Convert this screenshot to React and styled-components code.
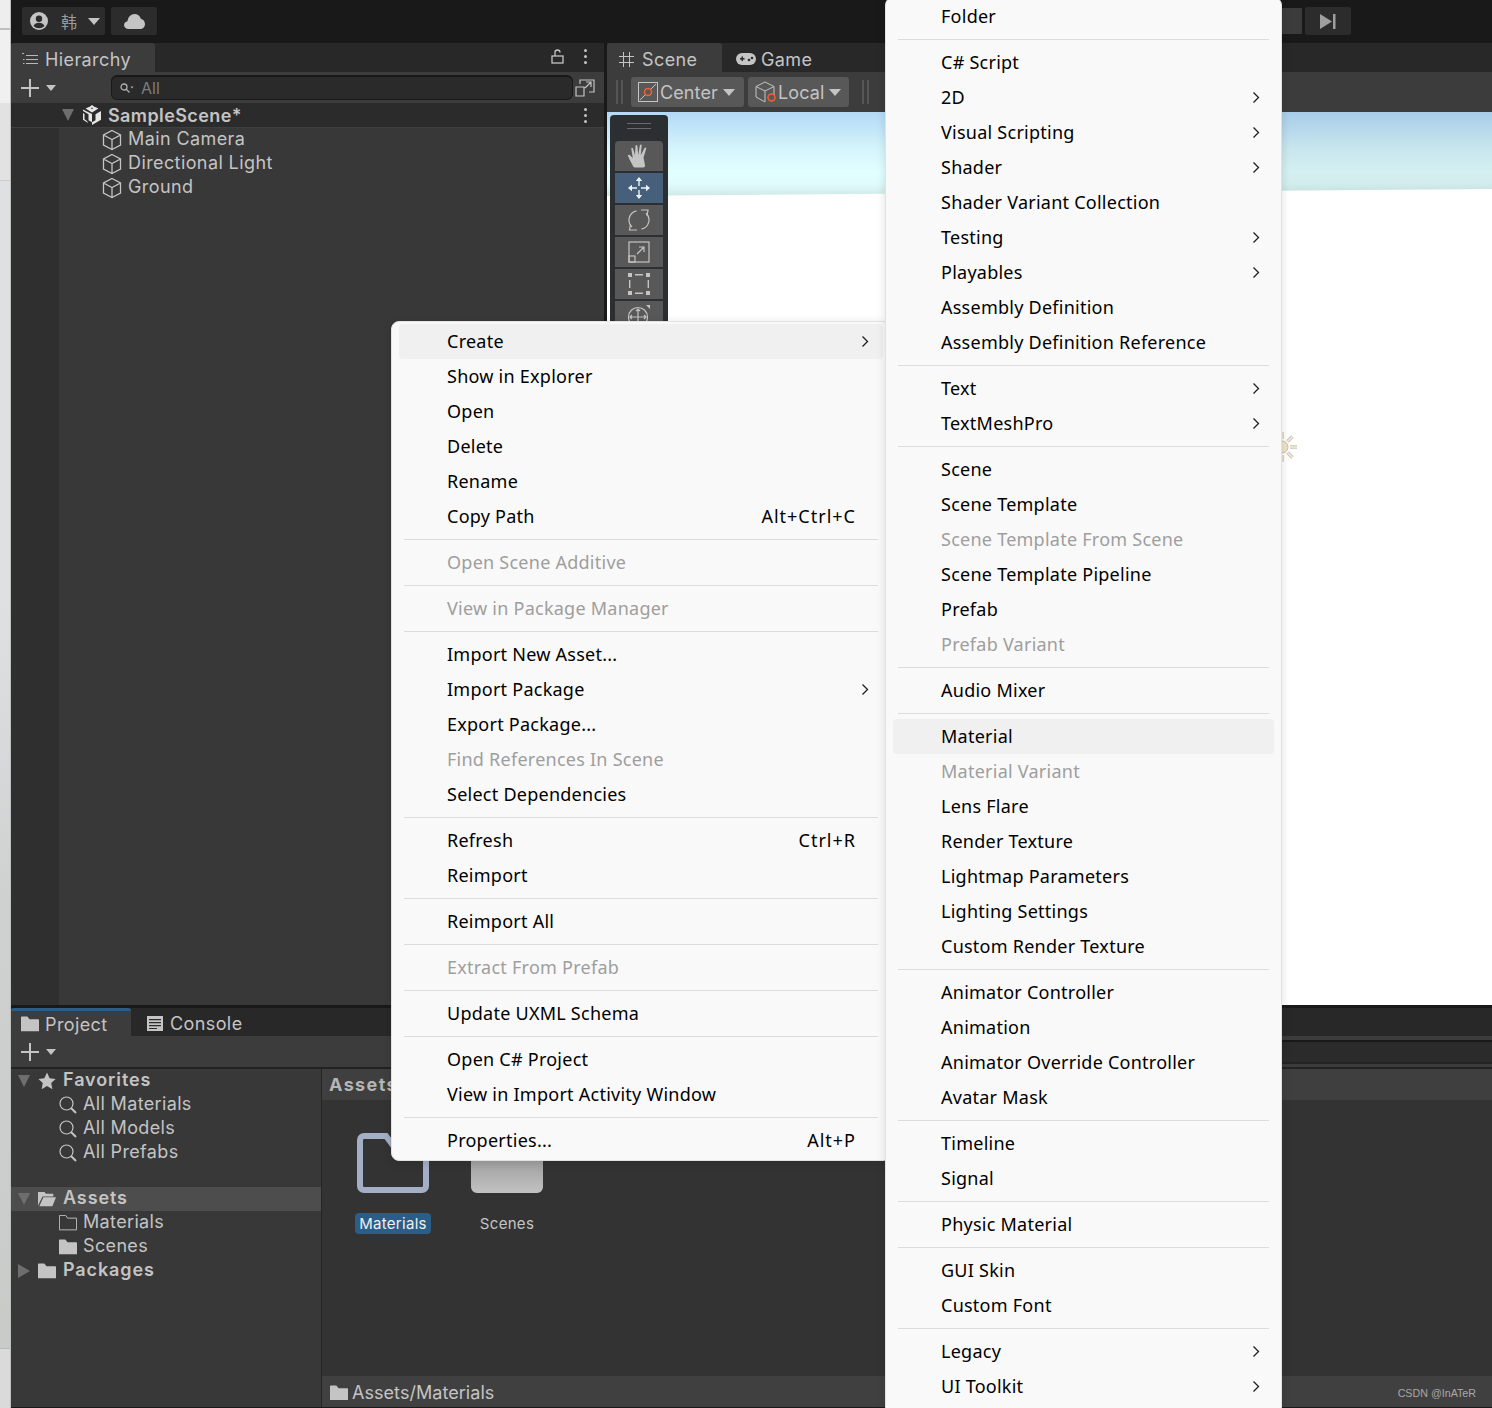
import React from "react";
import styled, { createGlobalStyle } from "styled-components";

const createMenu = [
  [{ label: "Folder" }],
  [
    { label: "C# Script" },
    { label: "2D", sub: true },
    { label: "Visual Scripting", sub: true },
    { label: "Shader", sub: true },
    { label: "Shader Variant Collection" },
    { label: "Testing", sub: true },
    { label: "Playables", sub: true },
    { label: "Assembly Definition" },
    { label: "Assembly Definition Reference" },
  ],
  [{ label: "Text", sub: true }, { label: "TextMeshPro", sub: true }],
  [
    { label: "Scene" },
    { label: "Scene Template" },
    { label: "Scene Template From Scene", off: true },
    { label: "Scene Template Pipeline" },
    { label: "Prefab" },
    { label: "Prefab Variant", off: true },
  ],
  [{ label: "Audio Mixer" }],
  [
    { label: "Material", hot: true },
    { label: "Material Variant", off: true },
    { label: "Lens Flare" },
    { label: "Render Texture" },
    { label: "Lightmap Parameters" },
    { label: "Lighting Settings" },
    { label: "Custom Render Texture" },
  ],
  [
    { label: "Animator Controller" },
    { label: "Animation" },
    { label: "Animator Override Controller" },
    { label: "Avatar Mask" },
  ],
  [{ label: "Timeline" }, { label: "Signal" }],
  [{ label: "Physic Material" }],
  [{ label: "GUI Skin" }, { label: "Custom Font" }],
  [{ label: "Legacy", sub: true }, { label: "UI Toolkit", sub: true }],
];

const contextMenu = [
  [
    { label: "Create", sub: true, hot: true },
    { label: "Show in Explorer" },
    { label: "Open" },
    { label: "Delete" },
    { label: "Rename" },
    { label: "Copy Path", keys: "Alt+Ctrl+C" },
  ],
  [{ label: "Open Scene Additive", off: true }],
  [{ label: "View in Package Manager", off: true }],
  [
    { label: "Import New Asset..." },
    { label: "Import Package", sub: true },
    { label: "Export Package..." },
    { label: "Find References In Scene", off: true },
    { label: "Select Dependencies" },
  ],
  [{ label: "Refresh", keys: "Ctrl+R" }, { label: "Reimport" }],
  [{ label: "Reimport All" }],
  [{ label: "Extract From Prefab", off: true }],
  [{ label: "Update UXML Schema" }],
  [{ label: "Open C# Project" }, { label: "View in Import Activity Window" }],
  [{ label: "Properties...", keys: "Alt+P" }],
];

const Folder = ({ size = 18, open, outline }) => (
  <svg width={size} height={size * 0.85} viewBox="0 0 20 17">
    {outline ? (
      <path d="M.5 16.500V.5h7l2 3h10v13z" fill="none" stroke="#c4c4c4" />
    ) : open ? (
      <path d="M0 16V1h7l2 2h8v3H5L0 16zm1.500 1L6 7h14l-4 10z" fill="#c4c4c4" />
    ) : (
      <path d="M0 17V1.500C0 1 .5.500 1 .5h6l2.500 3H19c.5 0 1 .5 1 1V17z" fill="#c4c4c4" />
    )}
  </svg>
);

const Cube = () => (
  <svg width="20" height="22" viewBox="0 0 20 22" fill="none" stroke="#c4c4c4" strokeWidth="1.300">
    <path d="M10 1.500l8.500 4.500v10L10 20.500 1.500 16V6zM1.500 6L10 10.500 18.500 6M10 10.500v10" />
  </svg>
);

const UnityLogo = () => (
  <svg width="20" height="20" viewBox="0 0 20 20" fill="#e6e6e6">
    <path d="M10 0l3 2.200-1.600 1.200L10 2.600l-1.400.8L7 2.200zM3.600 3.600L6.800 2 10 4l3.200-2 3.200 1.600L10 7.500z" />
    <path d="M1 6l5.500 3.200v6L10 17.300v-8.200L1 4.500zM19 6l-5.500 3.200v6L10 17.300V20l9-5.200z" />
    <path d="M1 8v6.800L6 18l-1-2-2.500-1.800V9z" />
  </svg>
);

const Magnifier = () => (
  <svg width="18" height="18" viewBox="0 0 18 18" fill="none" stroke="#c4c4c4">
    <circle cx="7.500" cy="7.500" r="6.500" strokeWidth="1.200" />
    <path d="M12 12l5 5" strokeWidth="2" />
  </svg>
);

const Hand = () => (
  <svg width="22" height="24" viewBox="0 0 22 24" fill="#c4c4c4">
    <path d="M4.500 21C3 18 .8 14.500 0 11.800c-.3-1.200 1-1.500 1.700-.7L4.800 14 3.300 5c-.2-1.300 1.500-1.600 1.800-.3L7 11 7.500 2c.1-1.300 1.800-1.300 1.900 0L10.200 11l1.700-9.800c.2-1.200 1.900-1 1.800.3l-1 9.800L16.500 4c.5-1.100 2-.5 1.700.7L15.500 13.500 17 21c.3 1.500-.5 2.500-2 2.500H7c-1.300 0-2-1.200-2.500-2.500z" />
  </svg>
);

const MoveIcon = () => (
  <svg width="24" height="24" viewBox="0 0 24 24" fill="none" stroke="#eef2f6" strokeWidth="1.400">
    <path d="M12 5v5M12 14v5M5 12h5M14 12h5" />
    <path d="M12 1l3.200 4H8.800zM12 23l3.200-4H8.800zM1 12l4-3.200v6.400zM23 12l-4-3.200v6.400z" fill="#eef2f6" stroke="none" />
  </svg>
);

const RotateIcon = () => (
  <svg width="22" height="22" viewBox="0 0 22 22" fill="none" stroke="#c4c4c4" strokeWidth="1.200">
    <path d="M8.500 1.800A9.500 9.500 0 0 0 4 18M13.500 20.200A9.500 9.500 0 0 0 18 4" />
    <path d="M13 1h7l-1 6M9 21H1.500l1-6" />
  </svg>
);

const ScaleIcon = () => (
  <svg width="22" height="22" viewBox="0 0 22 22" fill="none" stroke="#c4c4c4" strokeWidth="1.200">
    <rect x="1" y="1" width="20" height="20" />
    <rect x="1" y="15" width="6" height="6" />
    <path d="M9 13l7-7M11 6h5v5" />
  </svg>
);

const RectIcon = () => (
  <svg width="22" height="22" viewBox="0 0 22 22" fill="#c4c4c4">
    <path d="M0 0h4v4H0zM18 0h4v4h-4zM0 18h4v4H0zM18 18h4v4h-4zM7 1h8v1.400H7zM7 19.600h8V21H7zM1 7h1.400v8H1zM19.600 7H21v8h-1.400z" />
  </svg>
);

const TransformIcon = () => (
  <svg width="24" height="24" viewBox="0 0 24 24" fill="none" stroke="#c4c4c4" strokeWidth="1.200">
    <circle cx="11" cy="13" r="9.500" />
    <path d="M11 5v16M3 13h16M9 7l2-2 2 2M9 19l2 2 2-2M5 11l-2 2 2 2M17 11l2 2-2 2" />
    <path d="M19 1h4v4z" fill="#c4c4c4" stroke="none" />
  </svg>
);

const PivotIcon = () => (
  <svg width="20" height="20" viewBox="0 0 20 20" fill="none">
    <rect x=".5" y=".5" width="19" height="19" stroke="#c4c4c4" />
    <path d="M2 18l5-5M13 7l5-5" stroke="#c4c4c4" />
    <circle cx="10" cy="10" r="3.500" stroke="#f2622c" strokeWidth="1.500" />
  </svg>
);

const LocalIcon = () => (
  <svg width="21" height="22" viewBox="0 0 21 22" fill="none">
    <path d="M10 1l9 4.500V14M10 21l-9-5V5.500L10 1M1 5.500L10 10l9-4.500M10 10v11" stroke="#c4c4c4" />
    <circle cx="16.500" cy="16.500" r="3.500" stroke="#f2622c" strokeWidth="1.500" />
  </svg>
);

const AccountIcon = () => (
  <svg width="18" height="18" viewBox="0 0 18 18">
    <circle cx="9" cy="9" r="9" fill="#c4c4c4" />
    <circle cx="9" cy="6.800" r="3.200" fill="#2c2c2c" />
    <path d="M3.500 14c1-2.500 3-3.300 5.500-3.300s4.500.8 5.500 3.300A8 8 0 0 1 9 16.300 8 8 0 0 1 3.500 14z" fill="#2c2c2c" />
  </svg>
);

const CloudIcon = () => (
  <svg width="21" height="15" viewBox="0 0 21 15" fill="#c4c4c4">
    <path d="M4.500 15C2 15 0 13.300 0 11c0-2 1.500-3.500 3.500-3.800C4 3 7 0 10.500 0c3 0 5.500 2 6.300 4.800 2.400.4 4.200 2.700 4.200 5.200 0 2.800-2 5-4.500 5z" />
  </svg>
);

const GamepadIcon = () => (
  <svg width="20" height="12" viewBox="0 0 20 12">
    <rect width="20" height="12" rx="6" fill="#c4c4c4" />
    <path d="M4 5h1.500V3.500h1.500V5h1.500v1.500H7V8H5.500V6.500H4z" fill="#2b2b2b" />
    <circle cx="13" cy="7" r="1.300" fill="#2b2b2b" />
    <circle cx="16" cy="5" r="1.300" fill="#2b2b2b" />
  </svg>
);

const GridIcon = () => (
  <svg width="15" height="15" viewBox="0 0 15 15" stroke="#c4c4c4" fill="none">
    <path d="M4.500 0v15M10.500 0v15M0 4.500h15M0 10.500h15" />
  </svg>
);

const ListIcon = () => (
  <svg width="16" height="13" viewBox="0 0 16 13" stroke="#b8b8b8" fill="none">
    <path d="M4 2.500h12M4 6.500h12M4 10.500h12M0 .5h2M1 6.500h1.500M1 10.500h1.500" />
  </svg>
);

const ConsoleIcon = () => (
  <svg width="16" height="15" viewBox="0 0 16 15">
    <rect width="16" height="15" fill="#c4c4c4" />
    <path d="M2 3h12v1.300H2zM2 6h12v1.300H2zM2 9h12v1.300H2zM2 12h8v1H2z" fill="#2b2b2b" />
  </svg>
);

const StarIcon = () => (
  <svg width="18" height="18" viewBox="0 0 18 18" fill="#c4c4c4">
    <path d="M9 .5l2.600 5.700 6 .7-4.400 4.100 1.200 6.200L9 14.100l-5.400 3.100 1.200-6.200L.4 6.900l6-.7z" />
  </svg>
);

const LockIcon = () => (
  <svg width="13" height="15" viewBox="0 0 13 15" fill="none" stroke="#c4c4c4" strokeWidth="1.300">
    <rect x="1" y="7" width="11" height="7" />
    <path d="M4 7V3.500a2.500 2.500 0 0 1 5 0" />
  </svg>
);

const SearchKey = () => (
  <svg width="14" height="11" viewBox="0 0 14 11" fill="none" stroke="#b0b0b0" strokeWidth="1.300">
    <circle cx="4" cy="4" r="3" />
    <path d="M6 6l3.500 3.500" />
    <path d="M10.500 3.500h3l-1.500 2z" fill="#b0b0b0" stroke="none" />
  </svg>
);

const SceneExpandIcon = () => (
  <svg width="20" height="18" viewBox="0 0 20 18" fill="none" stroke="#c4c4c4" strokeWidth="1.200">
    <path d="M5 5V1h14v12h-5M1 8h8v9H1zM11 3h5v5M16 3l-6 6" />
  </svg>
);

const SunIcon = () => (
  <svg width="34" height="34" viewBox="0 0 34 34" fill="#eee3c8" stroke="#c2bda8" strokeWidth="1">
    <circle cx="17" cy="17" r="6" />
    <path d="M17 2v7M17 25v7M2 17h7M25 17h7M6.500 6.500l5 5M22.500 22.500l5 5M27.500 6.500l-5 5M11.500 22.500l-5 5" strokeWidth="3.500" stroke="#c9c5b4" />
    <path d="M17 2v7M17 25v7M2 17h7M25 17h7M6.500 6.500l5 5M22.500 22.500l5 5M27.500 6.500l-5 5M11.500 22.500l-5 5" strokeWidth="1.500" stroke="#f3ecd8" />
  </svg>
);

const GlobalStyle = createGlobalStyle`
  html, body {
    margin: 0;
    padding: 0;
    background: #191919;
  }
  * {
    box-sizing: border-box;
  }
`;

const Page = styled.div`
  position: relative;
  display: flex;
  width: 1492px;
  height: 1408px;
  overflow: hidden;
  font-family: Inter, "Noto Sans CJK SC", sans-serif;
  color: #c4c4c4;
`;

/* the window behind the editor, only a sliver of it shows */
const LeftStrip = styled.div`
  width: 11px;
  flex-shrink: 0;
  border-right: 1px solid #bdbfbf;
  background: linear-gradient(
    to bottom,
    #eeeeee 0 28px,
    #bfbfbf 28px 30px,
    #f0f0f0 30px 103px,
    #e2e2e2 103px 180px,
    #cccccc 180px 181px,
    #dfe0e2 181px 600px,
    #cfd1d1 900px,
    #c9cbc9 1348px,
    #b9b9b9 1348px 1349px,
    #dadada 1349px
  );
`;

const Editor = styled.div`
  flex: 1;
  display: flex;
  flex-direction: column;
  min-width: 0;
`;

const TopBar = styled.div`
  height: 43px;
  flex-shrink: 0;
  display: flex;
  align-items: center;
  padding: 0 0 1px 11px;
  gap: 6px;
  background: #191919;
`;

const TopButton = styled.div`
  height: 28px;
  width: ${(p) => p.$width}px;
  display: flex;
  align-items: center;
  justify-content: center;
  border-radius: 2px;
  background: #2c2c2c;
`;

const AccountButton = styled(TopButton)`
  justify-content: flex-start;
  padding-left: 8px;
  font-size: 16px;
  color: #9c9c9c;

  svg {
    margin-right: 13px;
  }
  ${() => Caret} {
    margin-left: 11px;
  }
`;

const PlayControls = styled.div`
  margin-left: auto;
  margin-right: 141px;
  display: flex;
  align-items: center;
  gap: 3px;
`;

const PauseButton = styled.div`
  width: 46px;
  height: 26px;
  background: #3b3b3b;
`;

const StepIcon = styled.div`
  display: flex;
  gap: 1px;
  opacity: 0.75;
`;

const Caret = styled.span`
  display: inline-block;
  width: 0;
  height: 0;
  border-left: ${(p) => p.$size || 5}px solid transparent;
  border-right: ${(p) => p.$size || 5}px solid transparent;
  border-top: ${(p) => (p.$size || 5) + 1}px solid #c4c4c4;
`;

const Workspace = styled.div`
  height: 962px;
  flex-shrink: 0;
  display: flex;
`;

const Hierarchy = styled.div`
  width: 593px;
  flex-shrink: 0;
  display: flex;
  flex-direction: column;
  background: #383838;
`;

const TabStrip = styled.div`
  height: ${(p) => p.$height || 29}px;
  flex-shrink: 0;
  display: flex;
  align-items: stretch;
  background: #282828;
`;

const Tab = styled.div`
  width: ${(p) => p.$width}px;
  display: flex;
  align-items: center;
  gap: ${(p) => p.$gap || 7}px;
  padding-left: ${(p) => p.$pad || 11}px;
  padding-top: ${(p) => (p.$accent ? 1 : 3)}px;
  border-radius: 3px 3px 0 0;
  background: ${(p) => (p.$active ? "#3c3c3c" : "transparent")};
  border-top: ${(p) => (p.$accent ? "3px solid #2c5d87" : "0")};
  font-size: 18px;
  letter-spacing: 0.4px;
`;

const TabTools = styled.div`
  margin-left: auto;
  display: flex;
  align-items: center;
  gap: 20px;
  padding: 0 17px 2px 0;
`;

const Kebab = styled.div`
  display: flex;
  flex-direction: column;
  gap: 3px;

  &::before,
  &::after,
  span {
    content: "";
    display: block;
    width: 3px;
    height: 3px;
    border-radius: 50%;
    background: #c4c4c4;
  }
`;

const HierarchyBar = styled.div`
  height: 31px;
  flex-shrink: 0;
  display: flex;
  align-items: center;
  padding: 0 7px 0 10px;
  background: #3c3c3c;
`;

const AddButton = styled.div`
  width: 90px;
  flex-shrink: 0;
  display: flex;
  align-items: center;
  gap: 7px;
`;

const PlusGlyph = styled.div`
  position: relative;
  width: 18px;
  height: 18px;

  &::before,
  &::after {
    content: "";
    position: absolute;
    background: #c4c4c4;
  }
  &::before {
    left: 0;
    right: 0;
    top: 8px;
    height: 2px;
  }
  &::after {
    top: 0;
    bottom: 0;
    left: 8px;
    width: 2px;
  }
`;

const SearchField = styled.div`
  flex: 1;
  height: 25px;
  display: flex;
  align-items: center;
  gap: 7px;
  padding-left: 8px;
  border-radius: 6px;
  border: 1px solid #191919;
  border-top-width: 2px;
  background: #2a2a2a;
  font-size: 16px;
  color: #7d7d7d;
`;

const ExpandButton = styled.div`
  width: 24px;
  height: 24px;
  display: flex;
  align-items: center;
  justify-content: center;
`;

const SceneRow = styled.div`
  height: 25px;
  flex-shrink: 0;
  display: flex;
  align-items: center;
  padding: 0 17px 0 51px;
  background: #2b2b2b;
  border-bottom: 1px solid #3f3f3f;
  font-size: 18px;
  font-weight: 600;
  letter-spacing: 0.4px;
`;

const Disclosure = styled.span`
  width: 0;
  height: 0;
  flex-shrink: 0;
  ${(p) =>
    p.$closed
      ? `border-top: 7px solid transparent; border-bottom: 7px solid transparent; border-left: 12px solid #6e6e6e;`
      : `border-left: 6.500px solid transparent; border-right: 6.500px solid transparent; border-top: 12px solid #6e6e6e;`}
`;

const SceneName = styled.span`
  margin-left: 6px;
  flex: 1;
`;

const SceneIconBox = styled.span`
  display: flex;
  margin-left: 8px;
`;

const HierarchyBody = styled.div`
  flex: 1;
  display: flex;
`;

const Gutter = styled.div`
  width: 48px;
  background: #2f2f2f;
`;

const HierarchyList = styled.div`
  flex: 1;
  padding-left: 43px;
`;

const GameObject = styled.div`
  height: 24px;
  display: flex;
  align-items: center;
  gap: 6px;
  font-size: 18px;
  letter-spacing: 0.4px;
`;

const ObjectName = styled.span`
  padding-bottom: 4px;
`;

const PanelGap = styled.div`
  width: 3px;
  flex-shrink: 0;
  background: #191919;
`;

const ScenePanel = styled.div`
  flex: 1;
  min-width: 0;
  display: flex;
  flex-direction: column;
`;

const SceneBar = styled.div`
  height: 40px;
  flex-shrink: 0;
  display: flex;
  align-items: center;
  padding-left: 9px;
  background: #3c3c3c;
`;

const Grip = styled.div`
  width: 7px;
  height: 24px;
  flex-shrink: 0;
  margin-right: ${(p) => p.$after || 0}px;
  border-left: 2px solid #555555;
  border-right: 2px solid #555555;
`;

const PillButton = styled.div`
  width: ${(p) => p.$width}px;
  height: 30px;
  flex-shrink: 0;
  margin-right: ${(p) => p.$after || 0}px;
  display: flex;
  align-items: center;
  padding-left: 7px;
  gap: 2px;
  border-radius: 3px;
  background: #585858;
  font-size: 18px;
  letter-spacing: 0.1px;

  ${Caret} {
    margin-left: 3px;
  }
`;

const SceneView = styled.div`
  position: relative;
  flex: 1;
  background: #ffffff;
`;

const Sky = styled.div`
  height: 84px;
  clip-path: polygon(0 0, 100% 0, 100% 77px, 0 84px);
  background:
    linear-gradient(to right, transparent 45%, rgba(40, 60, 70, 0.08) 75%),
    linear-gradient(to bottom, #b2d9f6 0, #d6f5fb 38px, #e2ffff 60px, #e0fbfb 72px, #cfe9e6 84px);
`;

const Gizmos = styled.div`
  position: absolute;
  left: 3px;
  top: 3px;
  width: 58px;
  height: 207px;
  overflow: hidden;
  display: flex;
  flex-direction: column;
  align-items: center;
  gap: 2px;
  border-radius: 4px 4px 0 0;
  background: #2b2f32;
`;

const GizmoHandle = styled.div`
  width: 24px;
  height: 6px;
  flex-shrink: 0;
  margin: 8px 0 10px;
  border-top: 1px solid #6a6a6a;
  border-bottom: 1px solid #6a6a6a;
`;

const GizmoButton = styled.div`
  width: 48px;
  height: 30px;
  flex-shrink: 0;
  display: flex;
  align-items: center;
  justify-content: center;
  background: ${(p) => (p.$active ? "#46607c" : "#585858")};
  border-radius: ${(p) => (p.$first ? "4px 4px 0 0" : "0")};
`;

const SunPin = styled.div`
  position: absolute;
  left: 658px;
  top: 318px;
  display: flex;
`;

const ProjectPanel = styled.div`
  flex: 1;
  display: flex;
  flex-direction: column;
  border-top: 3px solid #191919;
  border-bottom: 1px solid #191919;
  background: #383838;
`;

const ProjectBar = styled.div`
  height: 31px;
  flex-shrink: 0;
  display: flex;
  align-items: center;
  padding: 4px 0 3px 10px;
  background: #3c3c3c;
`;

const ProjectSearch = styled.div`
  margin-left: auto;
  width: 500px;
  height: 24px;
  border-top: 2px solid #191919;
  border-bottom: 2px solid #232323;
  background: #2b2b2b;
`;

const ProjectBody = styled.div`
  flex: 1;
  display: flex;
  border-top: 2px solid #222222;
`;

const Tree = styled.div`
  width: 311px;
  flex-shrink: 0;
  border-right: 1px solid #252525;
  background: #383838;
`;

const TreeRow = styled.div`
  height: 24px;
  display: flex;
  align-items: center;
  padding-left: ${(p) => (p.$child ? 48 : 7)}px;
  margin-top: ${(p) => p.$gap || 0}px;
  background: ${(p) => (p.$selected ? "#4d4d4d" : "transparent")};
  font-size: 18px;
  letter-spacing: ${(p) => (p.$child ? 0.35 : 0.9)}px;
  font-weight: ${(p) => (p.$child ? 400 : 600)};
`;

const TreeName = styled.span`
  padding-bottom: 3px;
`;

const TreeArrow = styled.span`
  width: 13px;
  margin-right: 7px;
  display: flex;
`;

const TreeIcon = styled.span`
  width: 18px;
  display: flex;
  justify-content: center;
  margin-right: ${(p) => (p.$child ? 6 : 7)}px;
`;

const Browser = styled.div`
  flex: 1;
  display: flex;
  flex-direction: column;
  background: #333333;
`;

const BrowserHeader = styled.div`
  height: 31px;
  display: flex;
  align-items: center;
  padding-left: 7px;
  background: #3f3f3f;
  font-size: 18px;
  font-weight: 700;
  letter-spacing: 1.400px;
  color: #b5b5b5;
`;

const AssetGrid = styled.div`
  flex: 1;
  display: flex;
  padding: 33px 0 0 14px;
`;

const AssetTile = styled.div`
  width: 114px;
  display: flex;
  flex-direction: column;
  align-items: center;
  gap: 20px;
`;

const AssetName = styled.div`
  height: 21px;
  padding: 0 4px;
  display: flex;
  align-items: center;
  border-radius: 4px;
  background: ${(p) => (p.$selected ? "#2c5d87" : "transparent")};
  color: ${(p) => (p.$selected ? "#f0f0f0" : "#c4c4c4")};
  font-size: 15px;
  letter-spacing: 0.3px;
`;

const PathBar = styled.div`
  height: 31px;
  display: flex;
  align-items: center;
  gap: 4px;
  padding: 2px 0 0 8px;
  background: #404040;
  font-size: 18px;
  letter-spacing: 0.05px;
`;

const Watermark = styled.div`
  margin-left: auto;
  margin-right: 16px;
  font-family: "Liberation Sans", sans-serif;
  font-size: 10.7px;
  letter-spacing: 0;
  color: #a8a8a8;
`;

const MenuPanel = styled.div`
  position: absolute;
  left: ${(p) => p.$left}px;
  top: ${(p) => p.$top}px;
  width: ${(p) => p.$width}px;
  padding: ${(p) => p.$pad}px 0 ${(p) => p.$padEnd}px;
  border: 1px solid #e2e2e2;
  border-radius: 8px;
  background: #f9f9f9;
  box-shadow: 0 2px 10px rgba(0, 0, 0, 0.12);
  font-family: "Noto Sans", "Open Sans", sans-serif;
  font-size: 18px;
  letter-spacing: 0.25px;
  color: #000000;
`;

const MenuRow = styled.div`
  height: 35px;
  margin: 0 7px;
  display: flex;
  align-items: center;
  padding: 0 13px 2px 48px;
  border-radius: 4px;
  background: ${(p) => (p.$hot ? "#f0f0f0" : "transparent")};
  color: ${(p) => (p.$off ? "#9e9e9e" : "#000000")};
`;

const MenuLabel = styled.span`
  flex: 1;
`;

const MenuKeys = styled.span`
  margin-right: 14px;
  letter-spacing: 1px;
`;

const MenuDivider = styled.div`
  height: 1px;
  margin: 5px 12px;
  background: #dcdcdc;
`;

const Chevron = styled.span`
  width: 10px;
  height: 13px;
  margin-top: 2px;
  display: flex;
`;

const ChevronGlyph = () => (
  <Chevron>
    <svg width="10" height="13" viewBox="0 0 10 13" fill="none" stroke="#1f1f1f" strokeWidth="1.300">
      <path d="M2.500 1.500l5 5-5 5" />
    </svg>
  </Chevron>
);

const Menu = ({ groups, left, top, width, pad, padEnd }) => (
  <MenuPanel $left={left} $top={top} $width={width} $pad={pad} $padEnd={padEnd}>
    {groups.map((group, idx) => (
      <React.Fragment key={group[0].label}>
        {idx > 0 && <MenuDivider />}
        {group.map((item) => (
          <MenuRow key={item.label} $hot={item.hot} $off={item.off}>
            <MenuLabel>{item.label}</MenuLabel>
            {item.keys && <MenuKeys>{item.keys}</MenuKeys>}
            {item.sub && <ChevronGlyph />}
          </MenuRow>
        ))}
      </React.Fragment>
    ))}
  </MenuPanel>
);

const MaterialsFolder = () => (
  <svg width="72" height="60" viewBox="0 0 72 60" fill="none">
    <path d="M3 7a4 4 0 0 1 4-4h22l9 12h27a4 4 0 0 1 4 4v34a4 4 0 0 1-4 4H7a4 4 0 0 1-4-4z" stroke="#a4aec4" strokeWidth="6" />
  </svg>
);

const ScenesFolder = () => (
  <svg width="72" height="60" viewBox="0 0 72 60">
    <defs>
      <linearGradient id="scenesFill" x1="0" y1="0" x2="0" y2="1">
        <stop offset="0.4" stopColor="#9c9c9c" />
        <stop offset="1" stopColor="#c2c2c2" />
      </linearGradient>
    </defs>
    <path d="M0 6a6 6 0 0 1 6-6h24l9 12h27a6 6 0 0 1 6 6v36a6 6 0 0 1-6 6H6a6 6 0 0 1-6-6z" fill="url(#scenesFill)" />
  </svg>
);

export default function App() {
  return (
    <>
      <GlobalStyle />
      <Page>
        <LeftStrip />
        <Editor>
          <TopBar>
            <AccountButton $width={83}>
              <AccountIcon />
              <span>韩</span>
              <Caret $size={6} />
            </AccountButton>
            <TopButton $width={46}>
              <CloudIcon />
            </TopButton>
            <PlayControls>
              <PauseButton />
              <TopButton $width={46}>
                <StepIcon>
                  <svg width="16" height="15" viewBox="0 0 16 15" fill="#c4c4c4">
                    <path d="M0 0l12 7.500L0 15zM13 0h2.500v15H13z" />
                  </svg>
                </StepIcon>
              </TopButton>
            </PlayControls>
          </TopBar>

          <Workspace>
            <Hierarchy>
              <TabStrip>
                <Tab $active $width={144}>
                  <ListIcon />
                  Hierarchy
                </Tab>
                <TabTools>
                  <LockIcon />
                  <Kebab>
                    <span />
                  </Kebab>
                </TabTools>
              </TabStrip>
              <HierarchyBar>
                <AddButton>
                  <PlusGlyph />
                  <Caret />
                </AddButton>
                <SearchField>
                  <SearchKey />
                  All
                </SearchField>
                <ExpandButton>
                  <SceneExpandIcon />
                </ExpandButton>
              </HierarchyBar>
              <SceneRow>
                <Disclosure />
                <SceneIconBox>
                  <UnityLogo />
                </SceneIconBox>
                <SceneName>SampleScene*</SceneName>
                <Kebab>
                  <span />
                </Kebab>
              </SceneRow>
              <HierarchyBody>
                <Gutter />
                <HierarchyList>
                  {["Main Camera", "Directional Light", "Ground"].map((name) => (
                    <GameObject key={name}>
                      <Cube />
                      <ObjectName>{name}</ObjectName>
                    </GameObject>
                  ))}
                </HierarchyList>
              </HierarchyBody>
            </Hierarchy>
            <PanelGap />
            <ScenePanel>
              <TabStrip>
                <Tab $active $width={115} $pad={12} $gap={8}>
                  <GridIcon />
                  Scene
                </Tab>
                <Tab $width={120} $pad={14} $gap={5}>
                  <GamepadIcon />
                  Game
                </Tab>
              </TabStrip>
              <SceneBar>
                <Grip $after={8} />
                <PillButton $width={113} $after={4}>
                  <PivotIcon />
                  Center
                  <Caret $size={6} />
                </PillButton>
                <PillButton $width={101} $after={13}>
                  <LocalIcon />
                  Local
                  <Caret $size={6} />
                </PillButton>
                <Grip />
              </SceneBar>
              <SceneView>
                <Sky />
                <Gizmos>
                  <GizmoHandle />
                  <GizmoButton $first>
                    <Hand />
                  </GizmoButton>
                  <GizmoButton $active>
                    <MoveIcon />
                  </GizmoButton>
                  <GizmoButton>
                    <RotateIcon />
                  </GizmoButton>
                  <GizmoButton>
                    <ScaleIcon />
                  </GizmoButton>
                  <GizmoButton>
                    <RectIcon />
                  </GizmoButton>
                  <GizmoButton>
                    <TransformIcon />
                  </GizmoButton>
                </Gizmos>
                <SunPin>
                  <SunIcon />
                </SunPin>
              </SceneView>
            </ScenePanel>
          </Workspace>

          <ProjectPanel>
            <TabStrip $height={28}>
              <Tab $active $accent $width={120} $pad={10} $gap={6}>
                <Folder />
                Project
              </Tab>
              <Tab $width={130} $pad={16}>
                <ConsoleIcon />
                Console
              </Tab>
            </TabStrip>
            <ProjectBar>
              <AddButton>
                <PlusGlyph />
                <Caret />
              </AddButton>
              <ProjectSearch />
            </ProjectBar>
            <ProjectBody>
              <Tree>
                <TreeRow>
                  <TreeArrow>
                    <Disclosure />
                  </TreeArrow>
                  <TreeIcon>
                    <StarIcon />
                  </TreeIcon>
                  <TreeName>Favorites</TreeName>
                </TreeRow>
                {["All Materials", "All Models", "All Prefabs"].map((name) => (
                  <TreeRow key={name} $child>
                    <TreeIcon $child>
                      <Magnifier />
                    </TreeIcon>
                    <TreeName>{name}</TreeName>
                  </TreeRow>
                ))}
                <TreeRow $gap={22} $selected>
                  <TreeArrow>
                    <Disclosure />
                  </TreeArrow>
                  <TreeIcon>
                    <Folder open />
                  </TreeIcon>
                  <TreeName>Assets</TreeName>
                </TreeRow>
                <TreeRow $child>
                  <TreeIcon $child>
                    <Folder outline />
                  </TreeIcon>
                  <TreeName>Materials</TreeName>
                </TreeRow>
                <TreeRow $child>
                  <TreeIcon $child>
                    <Folder />
                  </TreeIcon>
                  <TreeName>Scenes</TreeName>
                </TreeRow>
                <TreeRow>
                  <TreeArrow>
                    <Disclosure $closed />
                  </TreeArrow>
                  <TreeIcon>
                    <Folder />
                  </TreeIcon>
                  <TreeName>Packages</TreeName>
                </TreeRow>
              </Tree>
              <Browser>
                <BrowserHeader>Assets</BrowserHeader>
                <AssetGrid>
                  <AssetTile>
                    <MaterialsFolder />
                    <AssetName $selected>Materials</AssetName>
                  </AssetTile>
                  <AssetTile>
                    <ScenesFolder />
                    <AssetName>Scenes</AssetName>
                  </AssetTile>
                </AssetGrid>
                <PathBar>
                  <Folder />
                  Assets/Materials
                  <Watermark>CSDN @InATeR</Watermark>
                </PathBar>
              </Browser>
            </ProjectBody>
          </ProjectPanel>
        </Editor>

        <Menu groups={contextMenu} left={391} top={321} width={500} pad={2} padEnd={2} />
        <Menu groups={createMenu} left={885} top={-3} width={397} pad={1} padEnd={30} />
      </Page>
    </>
  );
}
